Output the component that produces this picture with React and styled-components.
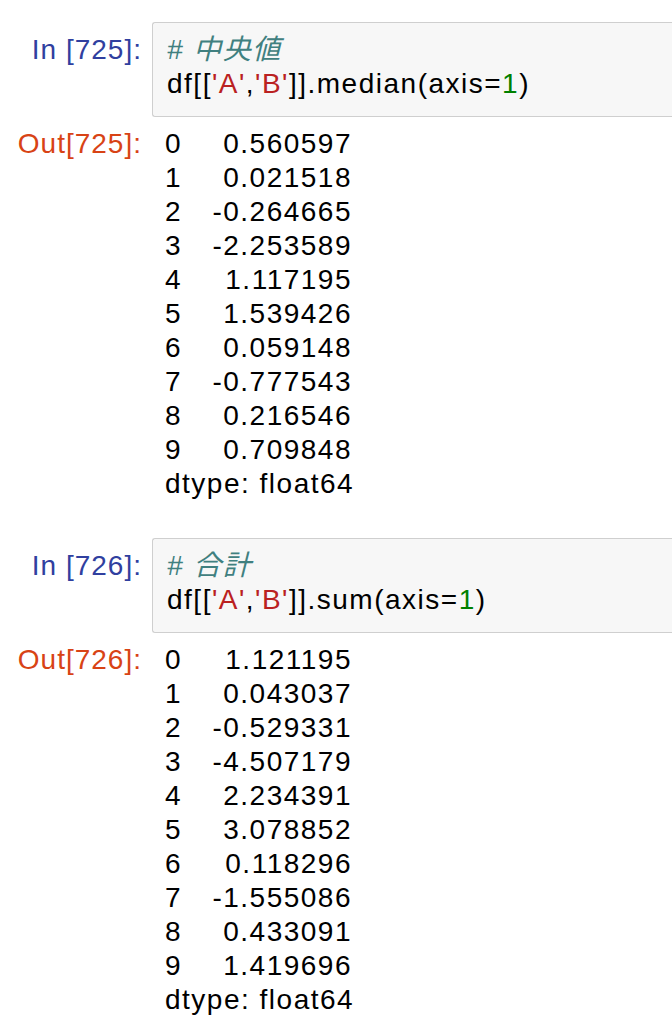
import React from 'react';
import styled, {createGlobalStyle} from 'styled-components';

const Global = createGlobalStyle`
  body { margin: 0; background: #fff; }
`

const Page = styled.div`
  font-family: "Liberation Sans", "Noto Sans CJK JP", sans-serif;
  font-size: 28px;
  letter-spacing: 1.5px;
  line-height: 34px;
  color: #000;
  padding-top: 22px;
`

const Cell = styled.div`
  display: flex;
  align-items: flex-start;
  margin-bottom: ${p => p.gap || 0}px;
`

const Prompt = styled.div`
  width: 142px;
  flex: none;
  text-align: right;
  letter-spacing: 1px;
  color: ${p => p.out ? '#D84315' : '#303F9F'};
  padding-top: ${p => p.out ? 0 : 11}px;
  margin-right: ${p => p.out ? 23 : 10}px;
`

const InputBox = styled.div`
  flex: 1;
  background: #f7f7f7;
  border: 1px solid #cfcfcf;
  border-right: none;
  border-radius: 3px 0 0 3px;
  padding: 10px 14px 12px;
  height: 71px;
  white-space: nowrap;
`

const Comment = styled.div`
  color: #408080;
  font-style: italic;
`
const Str = styled.span` color: #BA2121; `
const Num = styled.span` color: #008000; `

const Table = styled.div`
  display: grid;
  grid-template-columns: 36px 151px;
`
const Idx = styled.div``
const Val = styled.div` text-align: right; `

const Output = ({rows}) => (
  <div>
    <Table>
      {rows.map((v, i) => (
        <React.Fragment key={i}>
          <Idx>{i}</Idx>
          <Val>{v}</Val>
        </React.Fragment>
      ))}
    </Table>
    <div>dtype: float64</div>
  </div>
)

const median = ['0.560597', '0.021518', '-0.264665', '-2.253589', '1.117195', '1.539426', '0.059148', '-0.777543', '0.216546', '0.709848']
const sum = ['1.121195', '0.043037', '-0.529331', '-4.507179', '2.234391', '3.078852', '0.118296', '-1.555086', '0.433091', '1.419696']

export default function App() {
  return (
    <Page>
      <Global/>
      <Cell gap={10}>
        <Prompt>In [725]:</Prompt>
        <InputBox>
          <Comment># 中央値</Comment>
          <div>df[[<Str>'A'</Str>,<Str>'B'</Str>]].median(axis=<Num>1</Num>)</div>
        </InputBox>
      </Cell>
      <Cell gap={37}>
        <Prompt out>Out[725]:</Prompt>
        <Output rows={median}/>
      </Cell>
      <Cell gap={10}>
        <Prompt>In [726]:</Prompt>
        <InputBox>
          <Comment># 合計</Comment>
          <div>df[[<Str>'A'</Str>,<Str>'B'</Str>]].sum(axis=<Num>1</Num>)</div>
        </InputBox>
      </Cell>
      <Cell>
        <Prompt out>Out[726]:</Prompt>
        <Output rows={sum}/>
      </Cell>
    </Page>
  );
}
